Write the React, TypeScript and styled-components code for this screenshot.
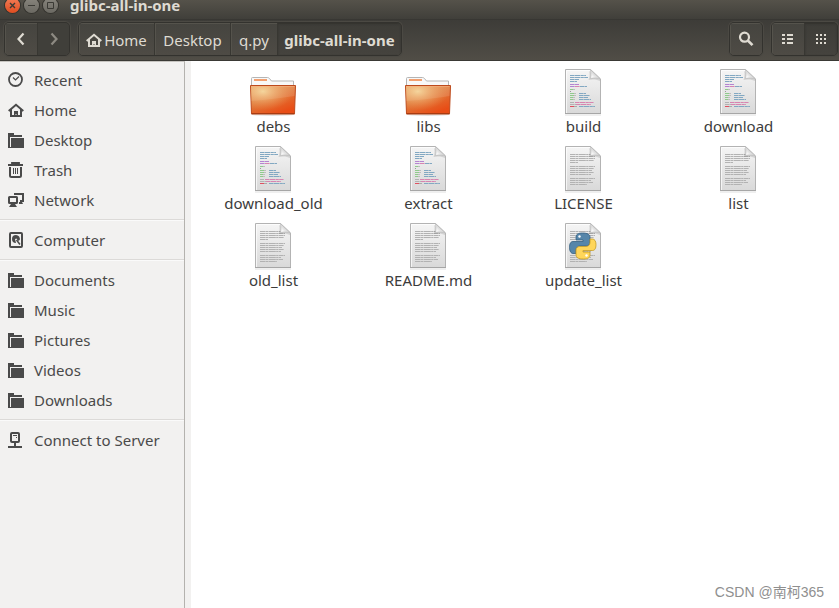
import React, { useState } from "react";
import styled, { createGlobalStyle, css } from "styled-components";

const GlobalStyle = createGlobalStyle`
  * { box-sizing: border-box; }
  html, body, #root { height: 100%; }
  body {
    margin: 0;
    overflow: hidden;
    background: #fff;
    font: 15px/20px "Noto Sans", "Open Sans", sans-serif;
    color: #3c3c3c;
  }
  button { font: inherit; padding: 0; border: 0; background: none; color: inherit; }
  ul { list-style: none; margin: 0; padding: 0; }
  a { color: inherit; text-decoration: none; }
  svg { display: block; flex: none; }
`;

const Window = styled.div`
  display: flex;
  flex-direction: column;
  height: 100vh;
  position: relative;
`;

const TitleBar = styled.header`
  display: flex;
  align-items: center;
  gap: 4px;
  height: 19px;
  padding: 0 5px 9px;
  background: linear-gradient(#55524a, #403f3a);
`;

const WindowButton = styled.button<{ $close?: boolean }>`
  display: grid;
  place-items: center;
  width: 15px;
  height: 15px;
  border-radius: 50%;
  color: #3b3a35;
  background: ${(p) => (p.$close ? "linear-gradient(#f47c56, #df4d20)" : "linear-gradient(#88857d, #6b6962)")};
  box-shadow: 0 0 0 1px #35342f;
`;

const Title = styled.h1`
  margin: 0 0 0 8px;
  font-size: 15px;
  line-height: 10px;
  font-weight: 700;
  color: #dfdbd2;
`;

const Toolbar = styled.div`
  display: flex;
  align-items: center;
  height: 42px;
  padding: 0 1px 2px 4px;
  background: linear-gradient(#3d3c38, #504d46);
  border-top: 1px solid #383733;
  border-bottom: 1px solid #3a3935;
  color: #dfdbd2;
`;

const ButtonGroup = styled.div`
  display: flex;
  height: 34px;
  border: 1px solid #33322e;
  border-radius: 5px;
  overflow: hidden;
  margin-right: 8px;
  box-shadow: 0 0 0 1px #4b4943;
  &:last-child { margin-right: 0; }
`;

const ToolButton = styled.button<{ $active?: boolean; $width?: number }>`
  display: flex;
  align-items: center;
  justify-content: center;
  gap: 2px;
  width: ${(p) => (p.$width ? `${p.$width}px` : "auto")};
  background: linear-gradient(#45443f, #4e4b45);
  box-shadow: inset 0 1px #55534c, inset 1px 0 #55534c;
  & + & { border-left: 1px solid #383732; }
  &:disabled { color: #8d8a82; background: #403f3a; box-shadow: none; }
  ${(p) =>
    p.$active &&
    css`
      background: linear-gradient(#3e3d38, #45433e);
      box-shadow: inset 0 1px 2px #33322e;
    `}
`;

const Crumb = styled(ToolButton)`
  padding-top: 1px;
  font-size: 15px;
  font-weight: ${(p) => (p.$active ? 700 : 400)};
`;

const Spacer = styled.div`
  flex: 1;
`;

const Body = styled.div`
  display: flex;
  flex: 1;
  min-height: 0;
`;

const Sidebar = styled.nav`
  width: 185px;
  flex: none;
  padding-top: 3px;
  background: #f2f1f0;
  border-top: 1px solid #c6c4c0;
  border-right: 1px solid #b4b2ae;
`;

const Places = styled.ul`
  & + & {
    margin-top: 4px;
    padding-top: 5px;
    border-top: 1px solid #dcdad8;
    box-shadow: inset 0 1px #fafafa;
  }
`;

const Place = styled.a`
  display: flex;
  align-items: center;
  gap: 10px;
  height: 30px;
  padding-left: 8px;
  line-height: 18px;
  color: #4a4a4a;
`;

const Gutter = styled.div`
  width: 6px;
  background: #f2f1f0;
`;

const Files = styled.main`
  flex: 1;
  display: grid;
  grid-template-columns: repeat(auto-fill, 155px);
  align-content: start;
  gap: 9px 0;
  padding: 7px 0 0 5px;
`;

const FileItem = styled.button`
  display: flex;
  flex-direction: column;
  align-items: center;
  line-height: 20px;
  svg { margin-right: 1px; }
`;

const Watermark = styled.small`
  position: absolute;
  right: 15px;
  bottom: 6px;
  font: 14px/20px "Liberation Sans", "Noto Sans CJK SC", sans-serif;
  color: #8f8f8f;
`;

const HomeIcon = () => (
  <svg width="16" height="16" viewBox="0 0 16 16" aria-hidden="true">
    <path d="M.7 9 8 2.800 15.300 9M3 7.500V14h10V7.500" fill="none" stroke="currentColor" strokeWidth="2" />
    <path d="M6 14V9h4v5H8.500v-2h-1v2z" fill="currentColor" />
  </svg>
);

const ClockIcon = () => (
  <svg width="16" height="16" viewBox="0 0 16 16" fill="none" stroke="currentColor" aria-hidden="true">
    <circle cx="7.5" cy="7.5" r="6.5" strokeWidth="1.8" />
    <path d="m5 5.500 2.500 2.500L11 4.500" strokeWidth="1.2" />
  </svg>
);

const FolderGlyph = () => (
  <svg width="16" height="16" viewBox="0 0 16 16" fill="currentColor" aria-hidden="true">
    <path d="M0 1h6v2h8v2H2v10h1v1H0z" />
    <path d="M3 6h13v10H3z" />
  </svg>
);

const TrashIcon = () => (
  <svg width="16" height="16" viewBox="0 0 16 16" aria-hidden="true">
    <path d="M4 2.800V1h7v1.800M0 3h15" fill="none" stroke="currentColor" strokeWidth="1.8" />
    <path d="M2 5v8.500q0 1.500 1.500 1.500h8q1.500 0 1.500-1.500V5" fill="none" stroke="currentColor" strokeWidth="2" />
    <path d="M5.500 6v6M7.500 6v6M9.500 6v6" stroke="currentColor" />
  </svg>
);

const NetworkIcon = () => (
  <svg width="16" height="16" viewBox="0 0 16 16" aria-hidden="true">
    <path d="M7 3V2h8v7h-3" fill="none" stroke="currentColor" strokeWidth="2" />
    <path d="M11 10h3l1 2h-4z" fill="currentColor" />
    <rect x="1" y="5" width="8" height="6" rx=".5" fill="none" stroke="currentColor" strokeWidth="2" />
    <path d="M3 12h4l2 3H1z" fill="currentColor" />
  </svg>
);

const DiskIcon = () => (
  <svg width="16" height="16" viewBox="0 0 16 16" aria-hidden="true">
    <rect x="2" y="1" width="12" height="14" rx="1" fill="none" stroke="currentColor" strokeWidth="2" />
    <path d="M8 3a4 4 0 0 1 3.800 5L10 9 8.500 6.500 7 7l1 4A4 4 0 0 1 8 3z" fill="currentColor" />
    <path d="m8.500 8 3.500 4.500" stroke="currentColor" strokeWidth="1.5" />
  </svg>
);

const ServerIcon = () => (
  <svg width="16" height="16" viewBox="0 0 16 16" aria-hidden="true">
    <rect x="3" y="1" width="8" height="9" rx="1" fill="none" stroke="currentColor" strokeWidth="2" />
    <path d="M5 3h4v1H5zM8 5h1v1H8zM6 11h2v3h6v2H0v-2h6z" fill="currentColor" />
  </svg>
);

const Chevron = ({ back }: { back?: boolean }) => (
  <svg width="16" height="16" viewBox="0 0 16 16" fill="none" stroke="currentColor" strokeWidth="2.2" aria-hidden="true">
    <path d={back ? "m10.500 2.500-5 5.500 5 5.500" : "m5.500 2.500 5 5.500-5 5.500"} />
  </svg>
);

const SearchIcon = () => (
  <svg width="16" height="16" viewBox="0 0 16 16" fill="none" stroke="currentColor" aria-hidden="true">
    <circle cx="6.5" cy="6.2" r="4.5" strokeWidth="2.2" />
    <path d="m9.800 9.500 4.700 4.700" strokeWidth="2.6" />
  </svg>
);

const ListIcon = () => (
  <svg width="16" height="16" viewBox="0 0 16 16" fill="currentColor" aria-hidden="true">
    {[3, 7, 11].map((y) => (
      <path key={y} d={`M2 ${y}h3v2H2zM7 ${y}h6v2H7z`} />
    ))}
  </svg>
);

const GridIcon = () => (
  <svg width="16" height="16" viewBox="0 0 16 16" fill="currentColor" aria-hidden="true">
    {[3, 7, 11].map((y) => (
      <path key={y} d={`M3 ${y}h2v2H3zM7 ${y}h2v2H7zM11 ${y}h2v2h-2z`} />
    ))}
  </svg>
);

const Gradients = () => (
  <svg width="0" height="0" aria-hidden="true">
    <defs>
      <linearGradient id="paper" x2="0" y2="1">
        <stop stopColor="#f5f5f5" />
        <stop offset="1" stopColor="#d9d9d9" />
      </linearGradient>
      <linearGradient id="fold" x1="0" y1="1" x2="1" y2="0">
        <stop offset=".15" stopColor="#fff" />
        <stop offset=".5" stopColor="#d4d4d4" />
      </linearGradient>
      <linearGradient id="front" x2=".6" y2="1">
        <stop stopColor="#e5a05c" />
        <stop offset=".5" stopColor="#e0793a" />
        <stop offset="1" stopColor="#e84d16" />
      </linearGradient>
      <radialGradient id="glow" cx=".27" cy=".2" r=".7">
        <stop stopColor="#f6dca4" stopOpacity=".9" />
        <stop offset="1" stopColor="#f0a060" stopOpacity="0" />
      </radialGradient>
    </defs>
  </svg>
);

const FolderPicture = () => (
  <svg width="48" height="48" viewBox="0 0 48 48" aria-hidden="true">
    <ellipse cx="24" cy="46.5" rx="22" ry="1.5" fill="#000" opacity=".12" />
    <path d="M2.500 20V10.500q0-1 1-1h15q1 0 2 1l2 2.500h22v8z" fill="#f8f8f8" stroke="#b5b5b5" />
    <path d="M5 11h13v2H5z" fill="#f2a070" />
    <path d="M1.500 17.500h45L45.500 46H2.500z" fill="url(#front)" stroke="#bd4a1c" />
    <path d="M2 18h44l-.4 10Q27 31 2.300 33z" fill="#fff" opacity=".12" />
    <path d="M2 18h44v27H3z" fill="url(#glow)" />
    <path d="M2.500 18.500h43" stroke="#f5b080" opacity=".6" />
    <path d="M3 45.500h42" stroke="#a83c12" />
  </svg>
);

const Sheet = ({ children }: { children: React.ReactNode }) => (
  <svg width="48" height="48" viewBox="0 0 48 48" aria-hidden="true">
    <path d="M6 47h36" stroke="#000" opacity=".12" />
    <path d="M6.500 1.500h25l10 9.500v34.500h-35z" fill="url(#paper)" stroke="#b3b3b3" />
    <path d="M7.500 45V2.500H31" fill="none" stroke="#fff" opacity=".7" />
    {children}
    <path d="M30 3c1 3 .5 6.500-.5 9 4-1 9-.5 11.500 1v-2z" fill="#000" opacity=".12" />
    <path d="M31.500 1.500c.5 4 .5 7 0 9 3-.8 8-.5 10 .5z" fill="url(#fold)" stroke="#b8b8b8" strokeWidth=".7" />
    <path d="M6 45.500h36" stroke="#a6a6a6" />
  </svg>
);

const TEXT_LINES: [number, number][] = [
  [9, 22], [11, 25], [13, 25], [15, 24], [17, 8],
  [21, 25], [23, 24], [25, 22], [27, 24], [29, 21],
  [33, 25], [35, 21], [37, 23], [39, 17],
];

const TextLines = () => (
  <g strokeDasharray="5 .4 3 .4 7 .4 2 .4">
    {TEXT_LINES.map(([y, w]) => (
      <path key={y} d={`M11 ${y + 0.5}h${w}`} stroke="#b2b2b2" />
    ))}
  </g>
);

const CODE_LINES: [number, number, number, string][] = [
  [11, 7, 16, "#82a8c2"], [11, 9, 18, "#82a8c2"], [11, 11, 9, "#82a8c2"], [11, 13, 7, "#82a8c2"],
  [11, 16, 9, "#b583d1"], [11, 18, 5, "#b583d1"], [16, 18, 5, "#d884b0"], [21, 18, 7, "#82a8c2"],
  [11, 21, 3, "#8fcb8b"], [14, 21, 2, "#bdbdbd"], [11, 23, 1, "#999"],
  [11, 25, 4, "#8fcb8b"], [15, 25, 2, "#bdbdbd"], [20, 25, 7, "#82a8c2"],
  [11, 27, 4, "#8fcb8b"], [15, 27, 2, "#bdbdbd"], [20, 27, 11, "#82a8c2"],
  [11, 29, 3, "#8fcb8b"], [14, 29, 2, "#bdbdbd"], [20, 29, 9, "#82a8c2"],
  [11, 31, 3, "#8fcb8b"], [14, 31, 2, "#bdbdbd"], [20, 31, 12, "#82a8c2"],
  [11, 34, 4, "#b2b2b2"], [16, 34, 19, "#d884b0"], [11, 36, 6, "#b2b2b2"], [17, 36, 15, "#d884b0"],
  [11, 38, 4, "#e05060"], [15, 38, 3, "#aaa"], [20, 38, 16, "#82a8c2"],
];

const CodeLines = () => (
  <g strokeDasharray="4 .4 6 .4 3 .4">
    {CODE_LINES.map(([x, y, w, color]) => (
      <path key={`${x}-${y}`} d={`M${x} ${y + 0.5}h${w}`} stroke={color} />
    ))}
  </g>
);

const PythonMark = () => (
  <g strokeWidth=".8">
    <path
      d="M23.500 11c-5 0-6.500 1.800-6.500 4v3h7v1.500H14c-2.500 0-3.500 2.500-3.500 6s1.500 6 3.500 6h3v-3.500c0-2.500 2-4 4-4h6.500c2 0 3.500-1.500 3.500-3.500V15c0-2.500-2.500-4-7.500-4z"
      fill="#5686aa"
      stroke="#365f80"
    />
    <path
      d="M24.500 37c5 0 6.500-1.800 6.500-4v-3h-7v-1.500h9.500c2.500 0 3.500-2.500 3.500-6s-1.500-5.500-3.500-5.500H31v3.500c0 2.500-2 4-4 4h-6.500c-2 0-3.500 1.500-3.500 3.500v5c0 2.500 2.500 4 7.500 4z"
      fill="#ffd65a"
      stroke="#c49a22"
    />
    <circle cx="20.5" cy="14.5" r="1.2" fill="#fff" />
    <circle cx="27.5" cy="33.5" r="1.2" fill="#fff" />
  </g>
);

type Kind = "folder" | "code" | "text" | "python";

const FilePicture = ({ kind }: { kind: Kind }) => {
  if (kind === "folder") return <FolderPicture />;
  return (
    <Sheet>
      {kind === "code" ? <CodeLines /> : <TextLines />}
      {kind === "python" && <PythonMark />}
    </Sheet>
  );
};

const files: [string, Kind][] = [
  ["debs", "folder"], ["libs", "folder"], ["build", "code"], ["download", "code"],
  ["download_old", "code"], ["extract", "code"], ["LICENSE", "text"], ["list", "text"],
  ["old_list", "text"], ["README.md", "text"], ["update_list", "python"],
];

const places: [string, React.FC][][] = [
  [["Recent", ClockIcon], ["Home", HomeIcon], ["Desktop", FolderGlyph], ["Trash", TrashIcon], ["Network", NetworkIcon]],
  [["Computer", DiskIcon]],
  [["Documents", FolderGlyph], ["Music", FolderGlyph], ["Pictures", FolderGlyph], ["Videos", FolderGlyph], ["Downloads", FolderGlyph]],
  [["Connect to Server", ServerIcon]],
];

export default function App() {
  const [view, setView] = useState("grid");
  return (
    <Window>
      <GlobalStyle />
      <TitleBar>
        <WindowButton $close aria-label="Close">
          <svg width="7" height="7" viewBox="0 0 7 7" stroke="currentColor" strokeWidth="1.4"><path d="m1 1 5 5M6 1 1 6" /></svg>
        </WindowButton>
        <WindowButton aria-label="Minimize">
          <svg width="7" height="7" viewBox="0 0 7 7" stroke="currentColor"><path d="M0 3.500h7" /></svg>
        </WindowButton>
        <WindowButton aria-label="Maximize">
          <svg width="7" height="7" viewBox="0 0 7 7" fill="none" stroke="currentColor"><path d="M.5.5h6v6h-6z" /></svg>
        </WindowButton>
        <Title>glibc-all-in-one</Title>
      </TitleBar>
      <Toolbar>
        <ButtonGroup>
          <ToolButton $width={32} aria-label="Back"><Chevron back /></ToolButton>
          <ToolButton $width={32} disabled aria-label="Forward"><Chevron /></ToolButton>
        </ButtonGroup>
        <ButtonGroup>
          <Crumb $width={75}><HomeIcon />Home</Crumb>
          <Crumb $width={76}>Desktop</Crumb>
          <Crumb $width={47}>q.py</Crumb>
          <Crumb $width={124} $active>glibc-all-in-one</Crumb>
        </ButtonGroup>
        <Spacer />
        <ButtonGroup>
          <ToolButton $width={32} aria-label="Search"><SearchIcon /></ToolButton>
        </ButtonGroup>
        <ButtonGroup>
          <ToolButton $width={32} $active={view === "list"} onClick={() => setView("list")} aria-label="List view"><ListIcon /></ToolButton>
          <ToolButton $width={33} $active={view === "grid"} onClick={() => setView("grid")} aria-label="Grid view"><GridIcon /></ToolButton>
        </ButtonGroup>
      </Toolbar>
      <Body>
        <Sidebar>
          {places.map((group) => (
            <Places key={group[0][0]}>
              {group.map(([name, Icon]) => (
                <li key={name}><Place href="#"><Icon />{name}</Place></li>
              ))}
            </Places>
          ))}
        </Sidebar>
        <Gutter />
        <Files>
          {files.map(([name, kind]) => (
            <FileItem key={name}><FilePicture kind={kind} />{name}</FileItem>
          ))}
        </Files>
      </Body>
      <Gradients />
      <Watermark>CSDN @南柯365</Watermark>
    </Window>
  );
}
